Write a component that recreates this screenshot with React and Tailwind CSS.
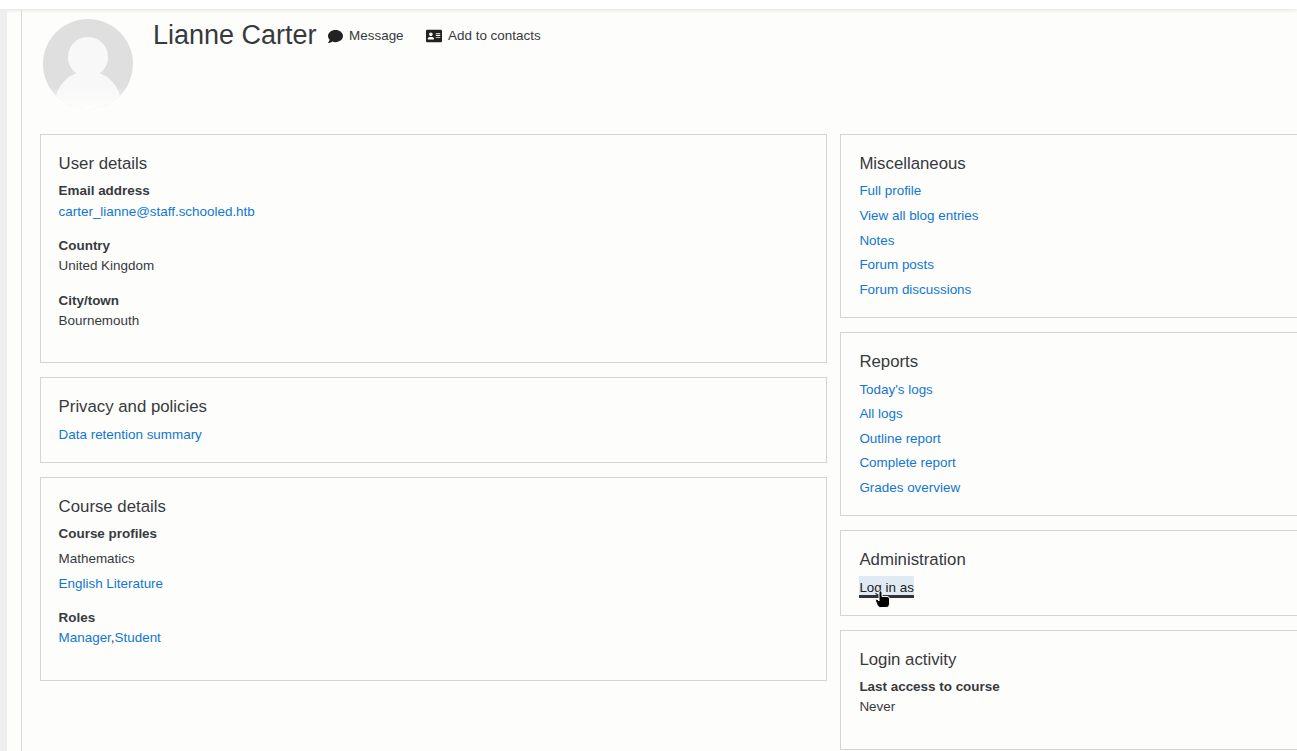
import React from 'react';
import { FaComment, FaAddressCard } from 'react-icons/fa';

function Card({ title, className, children }) {
  return (
    <div className={`border border-[#d4d4d4] pt-[19px] ${className}`}>
      <h3 className="text-[16.8px] leading-[20px] text-[#373a3c]">{title}</h3>
      {children}
    </div>
  );
}

function Link({ children, className = '' }) {
  return <a className={`block text-[#1177d1] ${className}`}>{children}</a>;
}

function Links({ items, className = 'mt-[7.5px] gap-[4.6px]' }) {
  return (
    <div className={`flex flex-col ${className}`}>
      {items.map((item) => (
        <Link key={item} className="leading-[20px]">{item}</Link>
      ))}
    </div>
  );
}

function Field({ label, children, className = '' }) {
  return (
    <div className={`leading-[20px] ${className}`}>
      <div className="font-bold">{label}</div>
      {children}
    </div>
  );
}

export default function App() {
  return (
    <div className="relative h-[751px] w-[1297px] overflow-hidden bg-[#fdfdfc] text-[13.43px] text-[#373a3c] font-['Liberation_Sans',Arial,sans-serif]">
      <div className="h-[9px] bg-white shadow-[0_1px_4px_rgba(0,0,0,0.12)]" />
      <div className="flex h-[742px]">
        <div className="w-[7px] shrink-0 bg-[#eeeeee]" />
        <div className="w-[15px] shrink-0 border-r border-[#d9d9d9]" />
        <main className="min-w-0 flex-1 pl-[18px]">
          <header className="flex h-[125px] items-start">
            <div className="relative ml-[3px] mt-[10px] h-[90px] w-[90px] overflow-hidden rounded-full bg-[#dfdfdf]">
              <div className="absolute left-[25px] top-[18px] h-[40px] w-[40px] rounded-full bg-[#f8f8f8]" />
              <div className="absolute left-[12px] top-[52px] h-[66px] w-[66px] rounded-full bg-[#f8f8f8]" />
              <div className="absolute inset-x-0 bottom-0 h-[22px] bg-gradient-to-b from-transparent to-[#fdfdfc]" />
            </div>
            <h1 className="ml-[20px] mt-[10px] text-[27px] leading-[32px] text-[#373a3c]">Lianne Carter</h1>
            <a className="ml-[11px] mt-[17px] flex items-center leading-[20px]">
              <FaComment className="mr-[6.5px] text-[15px] text-[#222]" />
              Message
            </a>
            <a className="ml-[22.5px] mt-[17px] flex items-center leading-[20px]">
              <FaAddressCard className="mr-[6px] text-[16px] text-[#222]" />
              Add to contacts
            </a>
          </header>

          <div className="flex gap-[13px]">
            <div className="flex w-[787px] shrink-0 flex-col gap-[14px]">
              <Card title="User details" className="h-[229px] pl-[17.6px]">
                <Field label="Email address" className="mt-[7px]">
                  <div className="mt-[1px]"><Link>carter_lianne@staff.schooled.htb</Link></div>
                </Field>
                <Field label="Country" className="mt-[14px]">United Kingdom</Field>
                <Field label="City/town" className="mt-[15px]">Bournemouth</Field>
              </Card>
              <Card title="Privacy and policies" className="h-[86px] pl-[17.6px]">
                <Links items={['Data retention summary']} />
              </Card>
              <Card title="Course details" className="h-[204px] pl-[17.6px]">
                <Field label="Course profiles" className="mt-[7px]">
                  <div className="mt-[5px]">Mathematics</div>
                  <div className="mt-[5px]"><Link>English Literature</Link></div>
                </Field>
                <Field label="Roles" className="mt-[14px]">
                  <span className="text-[#1177d1]">Manager</span>,<span className="text-[#1177d1]">Student</span>
                </Field>
              </Card>
            </div>

            <div className="flex w-[500px] shrink-0 flex-col gap-[14px]">
              <Card title="Miscellaneous" className="h-[184px] pl-[18.4px]">
                <Links
                  className="mt-[7px] gap-[4.75px]"
                  items={['Full profile', 'View all blog entries', 'Notes', 'Forum posts', 'Forum discussions']}
                />
              </Card>
              <Card title="Reports" className="h-[184px] pl-[18.4px]">
                <Links items={["Today's logs", 'All logs', 'Outline report', 'Complete report', 'Grades overview']} />
              </Card>
              <Card title="Administration" className="h-[86px] pl-[18.4px]">
                <div className="relative mt-[6px] h-[22px] w-fit border-b-[3px] border-[#333] bg-[#dfeaf5] leading-[24px] text-[#222]">
                  Log in as
                  <svg viewBox="0 0 15 18" className="absolute left-[16px] top-[14px] h-[18px] w-[15px]">
                    <path d="M4 2 C4 .5 7 .5 7 2 V6.5 H12 C13.5 6.5 14.5 7.5 14.5 9 V13.5 C14.5 16 13 17.5 11 17.5 H5.5 C3.5 17.5 3 16 2 14.5 L.6 11 C0 9.2 2 8.6 3 9.8 L4 11 Z" fill="#000" stroke="#fff" strokeWidth="1" />
                  </svg>
                </div>
              </Card>
              <Card title="Login activity" className="h-[120px] pl-[18.4px]">
                <Field label="Last access to course" className="mt-[7px]">Never</Field>
              </Card>
            </div>
          </div>
        </main>
      </div>
    </div>
  );
}
